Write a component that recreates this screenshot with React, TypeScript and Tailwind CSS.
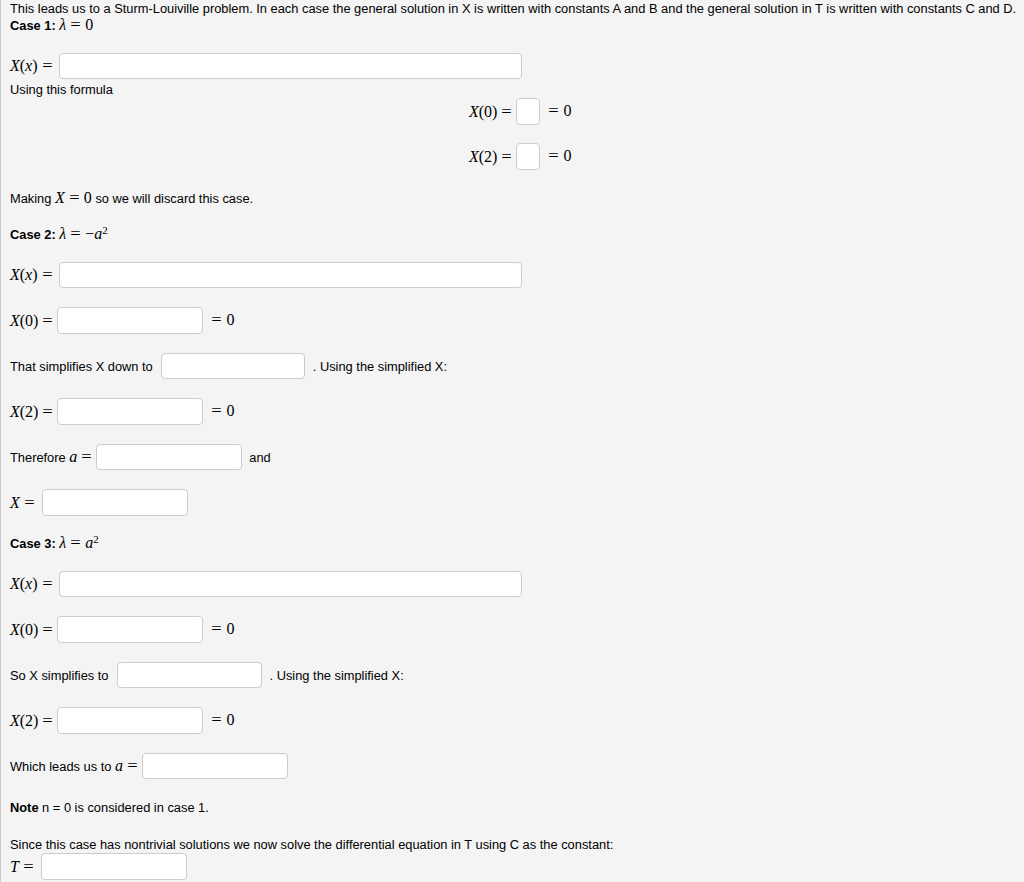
import React from "react";

const serif = "font-['Liberation_Serif','Times_New_Roman',serif] text-[16px]";

function Box({ w, tall = true }: { w: string; tall?: boolean }) {
  return (
    <input
      type="text"
      className={`${w} ${tall ? "h-[27px]" : "h-[26px]"} shrink-0 rounded-[4px] border border-[#cccccc] bg-white outline-none`}
    />
  );
}

// inline math; flat=true keeps it from growing the line box of a paragraph
function M({ children, flat = false }: { children: React.ReactNode; flat?: boolean }) {
  return (
    <span className={`${serif} ${flat ? "leading-[0]" : "leading-none"} whitespace-nowrap`}>{children}</span>
  );
}

function I({ children }: { children: React.ReactNode }) {
  return <span className="italic">{children}</span>;
}

function Eq() {
  return <span className="mx-[5px] inline-block scale-x-[1.15]">=</span>;
}

function Row({ children, className = "", tall = true }: { children: React.ReactNode; className?: string; tall?: boolean }) {
  return <div className={`flex ${tall ? "h-[27px]" : "h-[26px]"} items-center ${className}`}>{children}</div>;
}

function Sq() {
  return <sup className="text-[11px]">2</sup>;
}

export default function App() {
  return (
    <div className="min-h-screen border-l border-[#cccccc] bg-[#f4f4f4] pl-[9px] font-['Liberation_Sans',Arial,sans-serif] text-[12.85px] text-black leading-[17px]">
      <p className="h-[17px] whitespace-nowrap">
        This leads us to a Sturm-Louiville problem. In each case the general solution in X is written with
        constants A and B and the general solution in T is written with constants C and D.
      </p>
      <p className="h-[17px]">
        <b>Case 1: </b>
        <M flat>
          <I>λ</I>
          <Eq />0
        </M>
      </p>

      <Row className="mt-[19px]" tall={false}>
        <M>
          <I>X</I>(<I>x</I>)<Eq />
        </M>
        <span className="ml-[2px]" />
        <Box w="w-[463px]" tall={false} />
      </Row>
      <p className="mt-[2px] h-[17px]">Using this formula</p>

      <Row className="pl-[459px]">
        <M>
          <I>X</I>(0)<Eq />
        </M>
        <Box w="w-[24px]" />
        <span className="ml-[4px]">
          <M>
            <Eq />0
          </M>
        </span>
      </Row>
      <Row className="mt-[18px] pl-[459px]">
        <M>
          <I>X</I>(2)<Eq />
        </M>
        <Box w="w-[24px]" />
        <span className="ml-[4px]">
          <M>
            <Eq />0
          </M>
        </span>
      </Row>

      <p className="mt-[20px] h-[17px]">
        Making{" "}
        <M flat>
          <I>X</I>
          <Eq />0
        </M>{" "}
        so we will discard this case.
      </p>

      <p className="mt-[19px] h-[17px]">
        <b>Case 2: </b>
        <M flat>
          <I>λ</I>
          <Eq />−<I>a</I>
          <Sq />
        </M>
      </p>

      <Row className="mt-[19px]" tall={false}>
        <M>
          <I>X</I>(<I>x</I>)<Eq />
        </M>
        <span className="ml-[2px]" />
        <Box w="w-[463px]" tall={false} />
      </Row>

      <Row className="mt-[19px]">
        <M>
          <I>X</I>(0)<Eq />
        </M>
        <Box w="w-[146px]" />
        <span className="ml-[4px]">
          <M>
            <Eq />0
          </M>
        </span>
      </Row>

      <Row className="mt-[19px]" tall={false}>
        <span>That simplifies X down to</span>
        <span className="ml-[8px]" />
        <Box w="w-[144px]" tall={false} />
        <span className="ml-[8px]">. Using the simplified X:</span>
      </Row>

      <Row className="mt-[19px]">
        <M>
          <I>X</I>(2)<Eq />
        </M>
        <Box w="w-[146px]" />
        <span className="ml-[4px]">
          <M>
            <Eq />0
          </M>
        </span>
      </Row>

      <Row className="mt-[19px]" tall={false}>
        <span>
          Therefore{" "}
          <M>
            <I>a</I>
            <Eq />
          </M>
        </span>
        <Box w="w-[146px]" tall={false} />
        <span className="ml-[7px]">and</span>
      </Row>

      <Row className="mt-[19px]">
        <M>
          <I>X</I>
          <Eq />
        </M>
        <span className="ml-[3px]" />
        <Box w="w-[146px]" />
      </Row>

      <p className="mt-[19px] h-[17px]">
        <b>Case 3: </b>
        <M flat>
          <I>λ</I>
          <Eq />
          <I>a</I>
          <Sq />
        </M>
      </p>

      <Row className="mt-[19px]" tall={false}>
        <M>
          <I>X</I>(<I>x</I>)<Eq />
        </M>
        <span className="ml-[2px]" />
        <Box w="w-[463px]" tall={false} />
      </Row>

      <Row className="mt-[19px]">
        <M>
          <I>X</I>(0)<Eq />
        </M>
        <Box w="w-[146px]" />
        <span className="ml-[4px]">
          <M>
            <Eq />0
          </M>
        </span>
      </Row>

      <Row className="mt-[19px]" tall={false}>
        <span>So X simplifies to</span>
        <span className="ml-[8px]" />
        <Box w="w-[145px]" tall={false} />
        <span className="ml-[8px]">. Using the simplified X:</span>
      </Row>

      <Row className="mt-[19px]">
        <M>
          <I>X</I>(2)<Eq />
        </M>
        <Box w="w-[146px]" />
        <span className="ml-[4px]">
          <M>
            <Eq />0
          </M>
        </span>
      </Row>

      <Row className="mt-[19px]" tall={false}>
        <span>
          Which leads us to{" "}
          <M>
            <I>a</I>
            <Eq />
          </M>
        </span>
        <Box w="w-[146px]" tall={false} />
      </Row>

      <p className="mt-[20px] h-[17px]">
        <b>Note</b> n = 0 is considered in case 1.
      </p>

      <p className="mt-[20px] h-[17px]">
        Since this case has nontrivial solutions we now solve the differential equation in T using C as the
        constant:
      </p>
      <Row>
        <M>
          <I>T</I>
          <Eq />
        </M>
        <span className="ml-[3px]" />
        <Box w="w-[146px]" />
      </Row>
    </div>
  );
}
